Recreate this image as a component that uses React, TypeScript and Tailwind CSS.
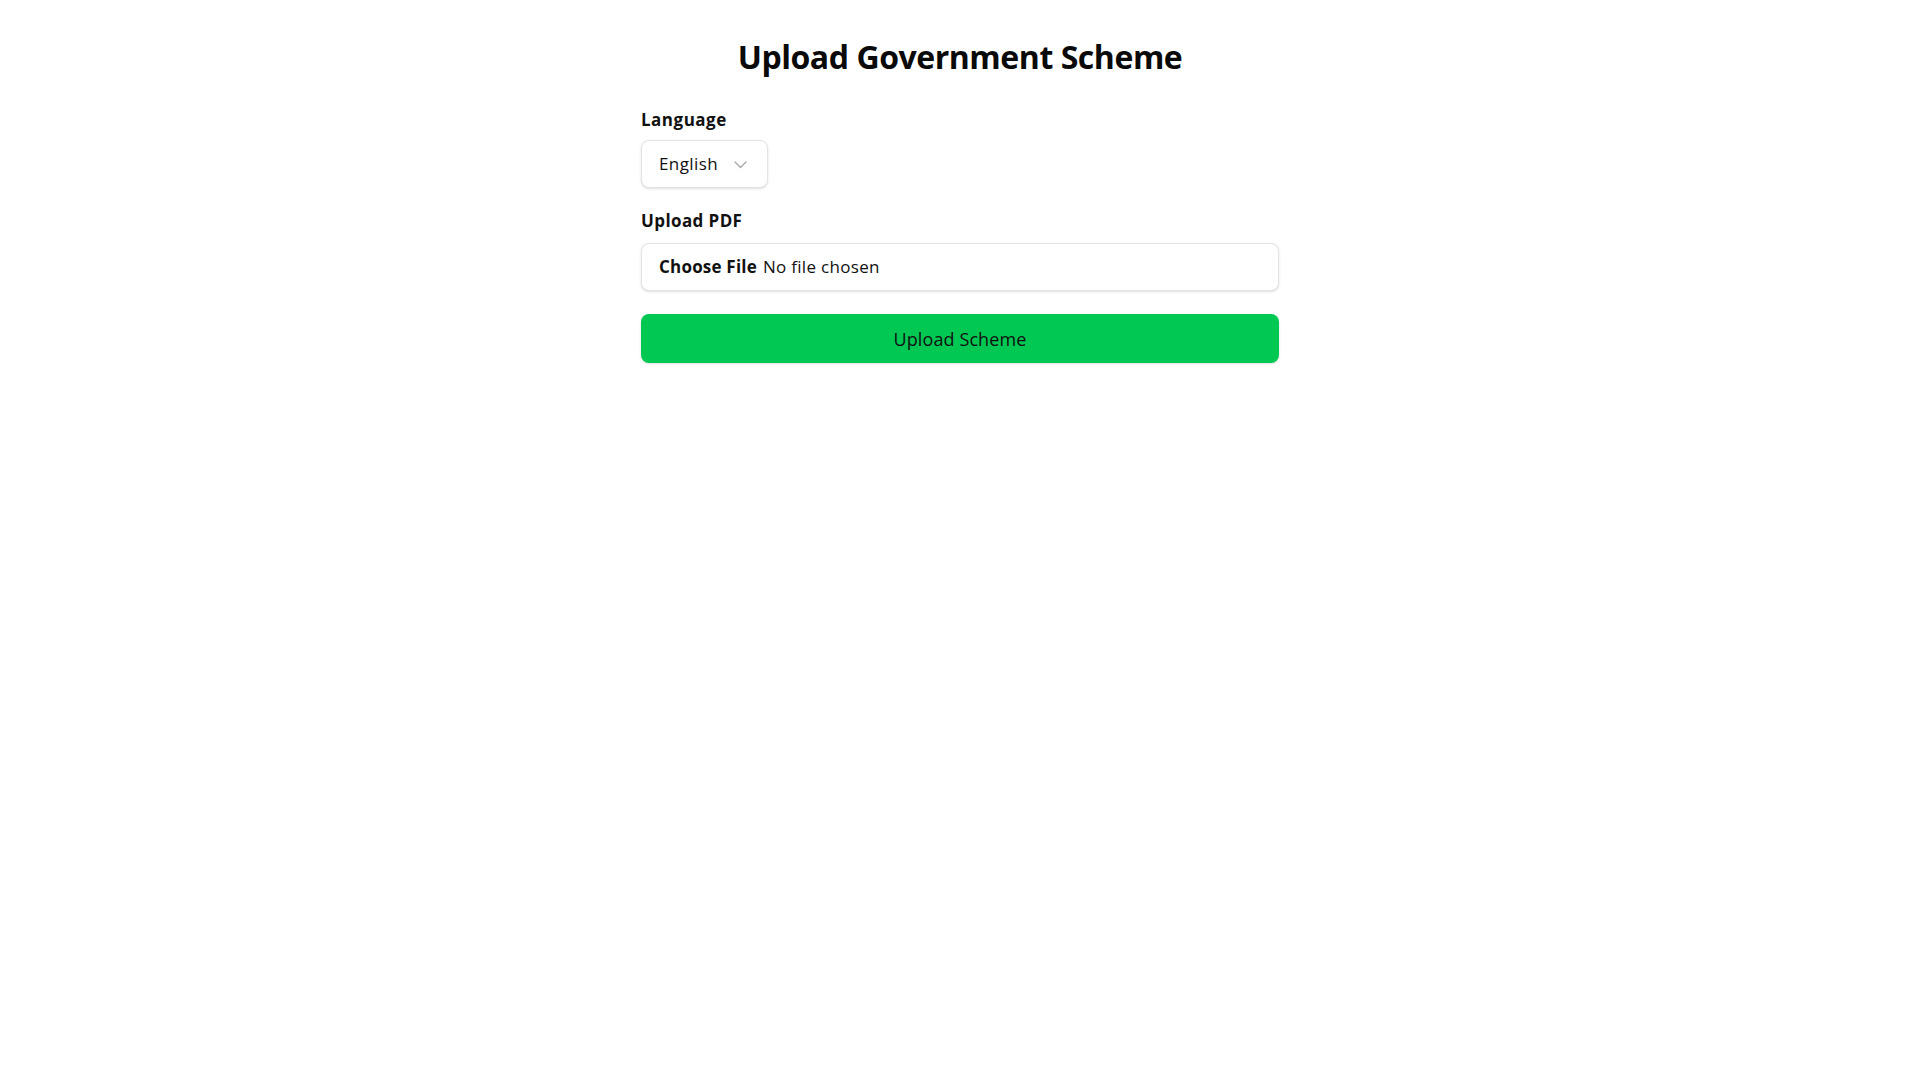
import React from "react";

export default function App() {
  return (
    <div className="min-h-screen bg-white text-[#111111] font-['Open_Sans',sans-serif]">
      <div className="mx-auto w-[638px] pt-[35px]">
        <h1 className="text-center text-[32px] font-bold leading-[44px] tracking-[-0.45px] text-[#0a0a0a]">
          Upload Government Scheme
        </h1>
        <div className="mt-[29px] flex flex-col">
          <label className="text-[17px] font-bold leading-[24px] tracking-[0.5px]">Language</label>
          <div className="mt-[8px] flex h-[48px] w-[127px] items-center rounded-lg border border-[#e3e3e3] bg-white pl-[17px] shadow-sm">
            <span className="text-[17px] leading-[24px] tracking-[0.4px]">English</span>
            <svg width="13" height="8" viewBox="0 0 13 8" fill="none" className="ml-[16px] mt-[1px]">
              <path d="M1 1l5.5 5.5L12 1" stroke="#a8a8a8" strokeWidth="1.4" strokeLinecap="round" strokeLinejoin="round" />
            </svg>
          </div>
        </div>
        <div className="mt-[21px] flex flex-col">
          <label className="text-[17px] font-bold leading-[24px] tracking-[0.4px]">Upload PDF</label>
          <div className="mt-[10px] flex h-[48px] w-full items-center rounded-lg border border-[#e3e3e3] bg-white pl-[17px] shadow-sm">
            <span className="text-[17px] font-bold leading-[24px] tracking-[0.2px]">Choose File</span>
            <span className="ml-[6px] text-[17px] leading-[24px] tracking-[0.3px]">No file chosen</span>
          </div>
        </div>
        <button className="mt-[23px] flex h-[49px] w-full items-center justify-center rounded-lg bg-[#00c853] text-[18px] font-medium leading-[24px] tracking-[0.1px] text-[#111111] shadow-sm">
          Upload Scheme
        </button>
      </div>
    </div>
  );
}
